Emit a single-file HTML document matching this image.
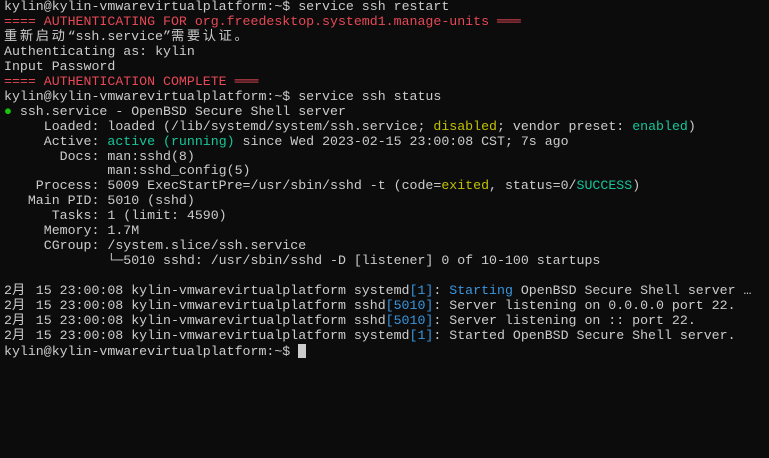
<!DOCTYPE html>
<html><head><meta charset="utf-8"><style>
html,body{margin:0;padding:0;background:#0c0c0c;width:769px;height:458px;overflow:hidden}
pre{margin:0;padding:0 0 0 4px;font-family:"Liberation Mono","Noto Sans CJK SC",monospace;font-size:13.25px;line-height:14.95px;color:#cccccc;white-space:pre}
.r{color:#e74856}.y{color:#c1c100}.g{color:#16c60c}.t{color:#16c69a}.c{color:#3a96dd}
.k{display:inline-block;width:15.9px;text-align:left}
.cur{display:inline-block;width:8px;height:14px;background:#cccccc;vertical-align:-3px}
</style></head><body><pre>kylin@kylin-vmwarevirtualplatform:~$ service ssh restart
<span class="r">==== AUTHENTICATING FOR org.freedesktop.systemd1.manage-units ═══</span>
<span class="k">重</span><span class="k">新</span><span class="k">启</span><span class="k">动</span>“ssh.service”<span class="k">需</span><span class="k">要</span><span class="k">认</span><span class="k">证</span><span class="k">。</span>
Authenticating as: kylin
Input Password
<span class="r">==== AUTHENTICATION COMPLETE ═══</span>
kylin@kylin-vmwarevirtualplatform:~$ service ssh status
<span class="g">●</span> ssh.service - OpenBSD Secure Shell server
     Loaded: loaded (/lib/systemd/system/ssh.service; <span class="y">disabled</span>; vendor preset: <span class="t">enabled</span>)
     Active: <span class="t">active (running)</span> since Wed 2023-02-15 23:00:08 CST; 7s ago
       Docs: man:sshd(8)
             man:sshd_config(5)
    Process: 5009 ExecStartPre=/usr/sbin/sshd -t (code=<span class="y">exited</span>, status=0/<span class="t">SUCCESS</span>)
   Main PID: 5010 (sshd)
      Tasks: 1 (limit: 4590)
     Memory: 1.7M
     CGroup: /system.slice/ssh.service
             └─5010 sshd: /usr/sbin/sshd -D [listener] 0 of 10-100 startups

2<span class="k">月</span> 15 23:00:08 kylin-vmwarevirtualplatform systemd<span class="c">[1]</span>: <span class="c">Starting</span> OpenBSD Secure Shell server …
2<span class="k">月</span> 15 23:00:08 kylin-vmwarevirtualplatform sshd<span class="c">[5010]</span>: Server listening on 0.0.0.0 port 22.
2<span class="k">月</span> 15 23:00:08 kylin-vmwarevirtualplatform sshd<span class="c">[5010]</span>: Server listening on :: port 22.
2<span class="k">月</span> 15 23:00:08 kylin-vmwarevirtualplatform systemd<span class="c">[1]</span>: Started OpenBSD Secure Shell server.
kylin@kylin-vmwarevirtualplatform:~$ <span class="cur"></span></pre></body></html>
